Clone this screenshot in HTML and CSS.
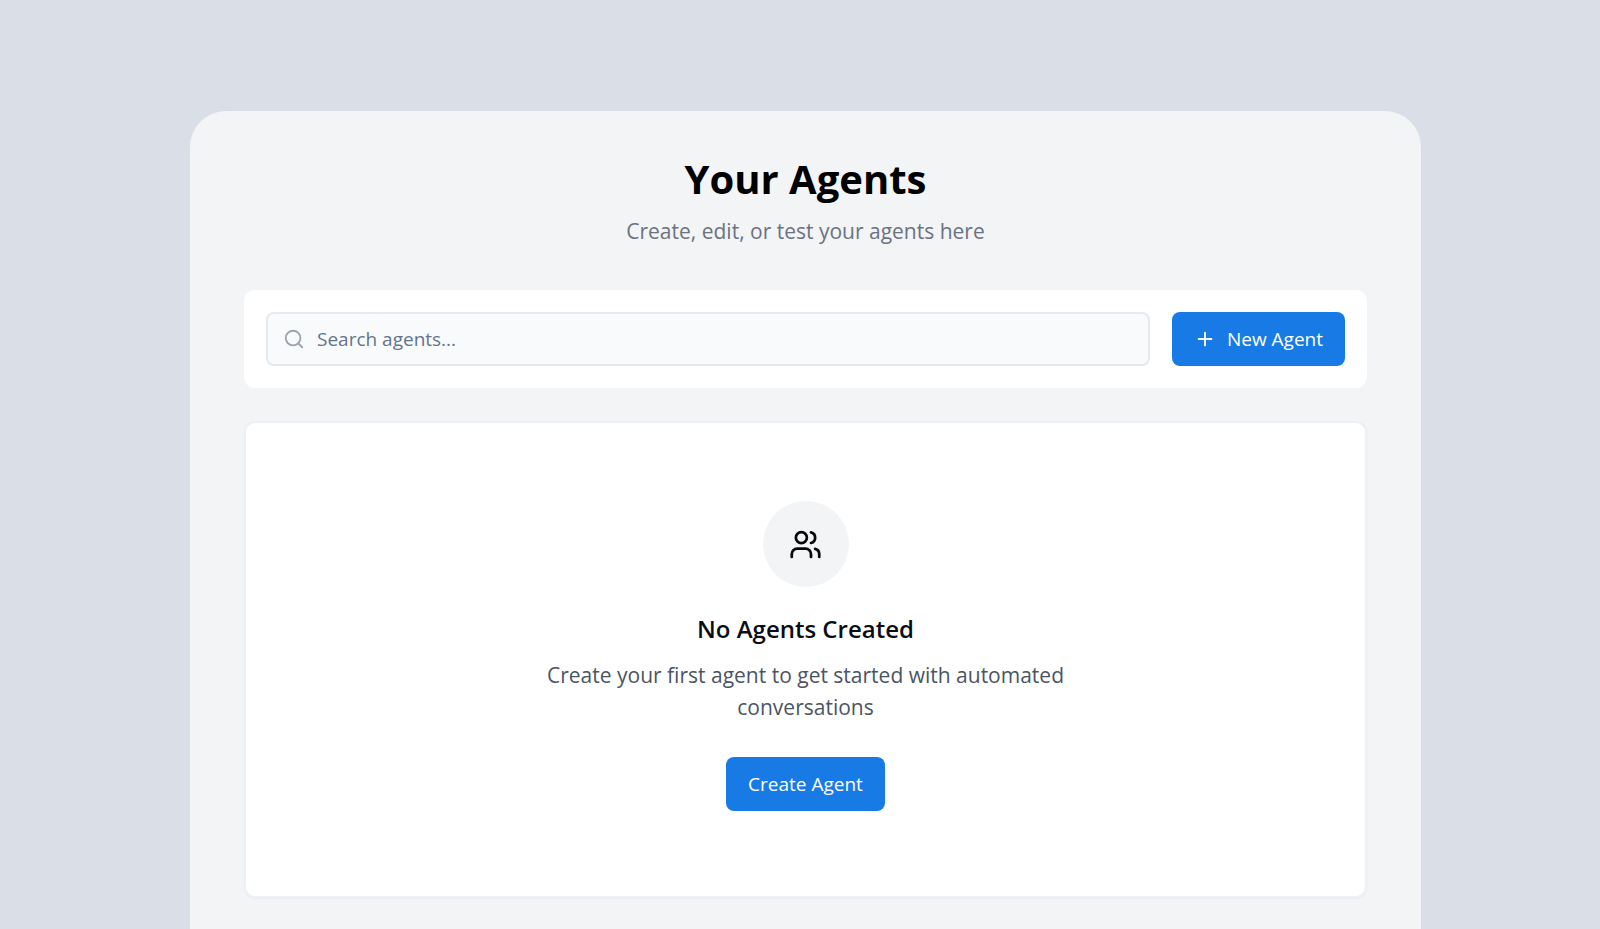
FILE: index.html
```html
<!DOCTYPE html>
<html lang="en">
<head>
  <meta charset="UTF-8">
  <meta name="viewport" content="width=device-width, initial-scale=1">
  <title>Your Agents</title>
  <link rel="stylesheet" href="styles.css">
</head>
<body>
  <main class="panel">
    <header class="header">
      <h1 class="title">Your Agents</h1>
      <p class="subtitle">Create, edit, or test your agents here</p>
    </header>

    <div class="toolbar">
      <label class="search">
        <svg class="search-icon" viewBox="0 0 24 24" fill="none" stroke="currentColor" stroke-width="2" stroke-linecap="round" stroke-linejoin="round" aria-hidden="true">
          <circle cx="11" cy="11" r="8"/>
          <path d="m21 21-4.3-4.3"/>
        </svg>
        <input type="text" class="search-input" placeholder="Search agents..." aria-label="Search agents">
      </label>
      <button type="button" class="button">
        <svg class="plus-icon" viewBox="0 0 24 24" fill="none" stroke="currentColor" stroke-width="2" stroke-linecap="round" stroke-linejoin="round" aria-hidden="true">
          <path d="M5 12h14"/>
          <path d="M12 5v14"/>
        </svg>
        New Agent
      </button>
    </div>

    <section class="empty-state">
      <div class="empty-icon">
        <svg class="users-icon" viewBox="0 0 24 24" fill="none" stroke="currentColor" stroke-width="2" stroke-linecap="round" stroke-linejoin="round" aria-hidden="true">
          <path d="M16 21v-2a4 4 0 0 0-4-4H6a4 4 0 0 0-4 4v2"/>
          <circle cx="9" cy="7" r="4"/>
          <path d="M22 21v-2a4 4 0 0 0-3-3.87"/>
          <path d="M16 3.13a4 4 0 0 1 0 7.75"/>
        </svg>
      </div>
      <h2 class="empty-title">No Agents Created</h2>
      <p class="empty-text">Create your first agent to get started with automated conversations</p>
      <button type="button" class="button">Create Agent</button>
    </section>
  </main>
</body>
</html>
```
FILE: styles.css
```css
:root {
  --font: "Open Sans", "Noto Sans", sans-serif;
  --primary: #187be5;
  --page: #dadee7;
  --surface: #f3f4f6;
  --border: #e5eaef;
}

* {
  box-sizing: border-box;
}

body {
  margin: 0;
  min-height: 100vh;
  display: flex;
  background: var(--page);
  font-family: var(--font);
  color: #0c0d14;
}

.panel {
  flex: 1;
  min-width: 0;
  margin: 111px 179px 0 190px;
  padding: 44px 54px 31px;
  background: var(--surface);
  border-radius: 36px 36px 0 0;
}

.header {
  margin-bottom: 43px;
  text-align: center;
}

.title {
  margin: 0 0 12px;
  font-size: 40px;
  line-height: 48px;
  font-weight: 700;
  color: #000;
}

.subtitle {
  margin: 0;
  font-size: 21px;
  line-height: 32px;
  color: #6b7280;
}

/* Search + new agent */
.toolbar {
  display: flex;
  gap: 22px;
  margin-bottom: 33px;
  padding: 22px;
  background: #fff;
  border-radius: 11px;
}

.search {
  flex: 1;
  min-width: 0;
  height: 54px;
  display: flex;
  align-items: center;
  gap: 12px;
  padding: 0 15px;
  background: #f9fafc;
  border: 2px solid var(--border);
  border-radius: 8px;
}

.search:focus-within {
  border-color: var(--primary);
}

.search-icon {
  flex: none;
  width: 22px;
  height: 22px;
  color: #9ca3af;
}

.search-input {
  flex: 1;
  min-width: 0;
  padding: 0;
  border: none;
  outline: none;
  background: transparent;
  font-family: var(--font);
  font-size: 19px;
  line-height: 28px;
  color: #0c0d14;
}

.search-input::placeholder {
  color: #64748b;
  opacity: 1;
}

.button {
  flex: none;
  height: 54px;
  display: flex;
  align-items: center;
  justify-content: center;
  gap: 11px;
  padding: 0 22px;
  border: none;
  border-radius: 8px;
  background: var(--primary);
  color: #fff;
  font-family: var(--font);
  font-size: 19px;
  line-height: 28px;
  font-weight: 500;
  cursor: pointer;
}

.button:hover {
  background: #126bcb;
}

.plus-icon {
  width: 22px;
  height: 22px;
}

/* Empty state */
.empty-state {
  display: flex;
  flex-direction: column;
  align-items: center;
  padding: 78px 22px 85px;
  background: #fff;
  border: 2px solid #edf0f4;
  border-radius: 11px;
  box-shadow: 0 1px 2px rgba(15, 23, 42, 0.04);
  text-align: center;
}

.empty-icon {
  display: flex;
  align-items: center;
  justify-content: center;
  width: 86px;
  height: 86px;
  margin-bottom: 26px;
  border-radius: 50%;
  background: #f3f4f6;
}

.users-icon {
  width: 33px;
  height: 33px;
  color: #09090b;
}

.empty-title {
  margin: 0 0 14px;
  font-size: 24px;
  line-height: 32px;
  font-weight: 600;
}

.empty-text {
  max-width: 600px;
  margin: 0 0 34px;
  font-size: 21px;
  line-height: 32px;
  color: #4b5563;
}
```
